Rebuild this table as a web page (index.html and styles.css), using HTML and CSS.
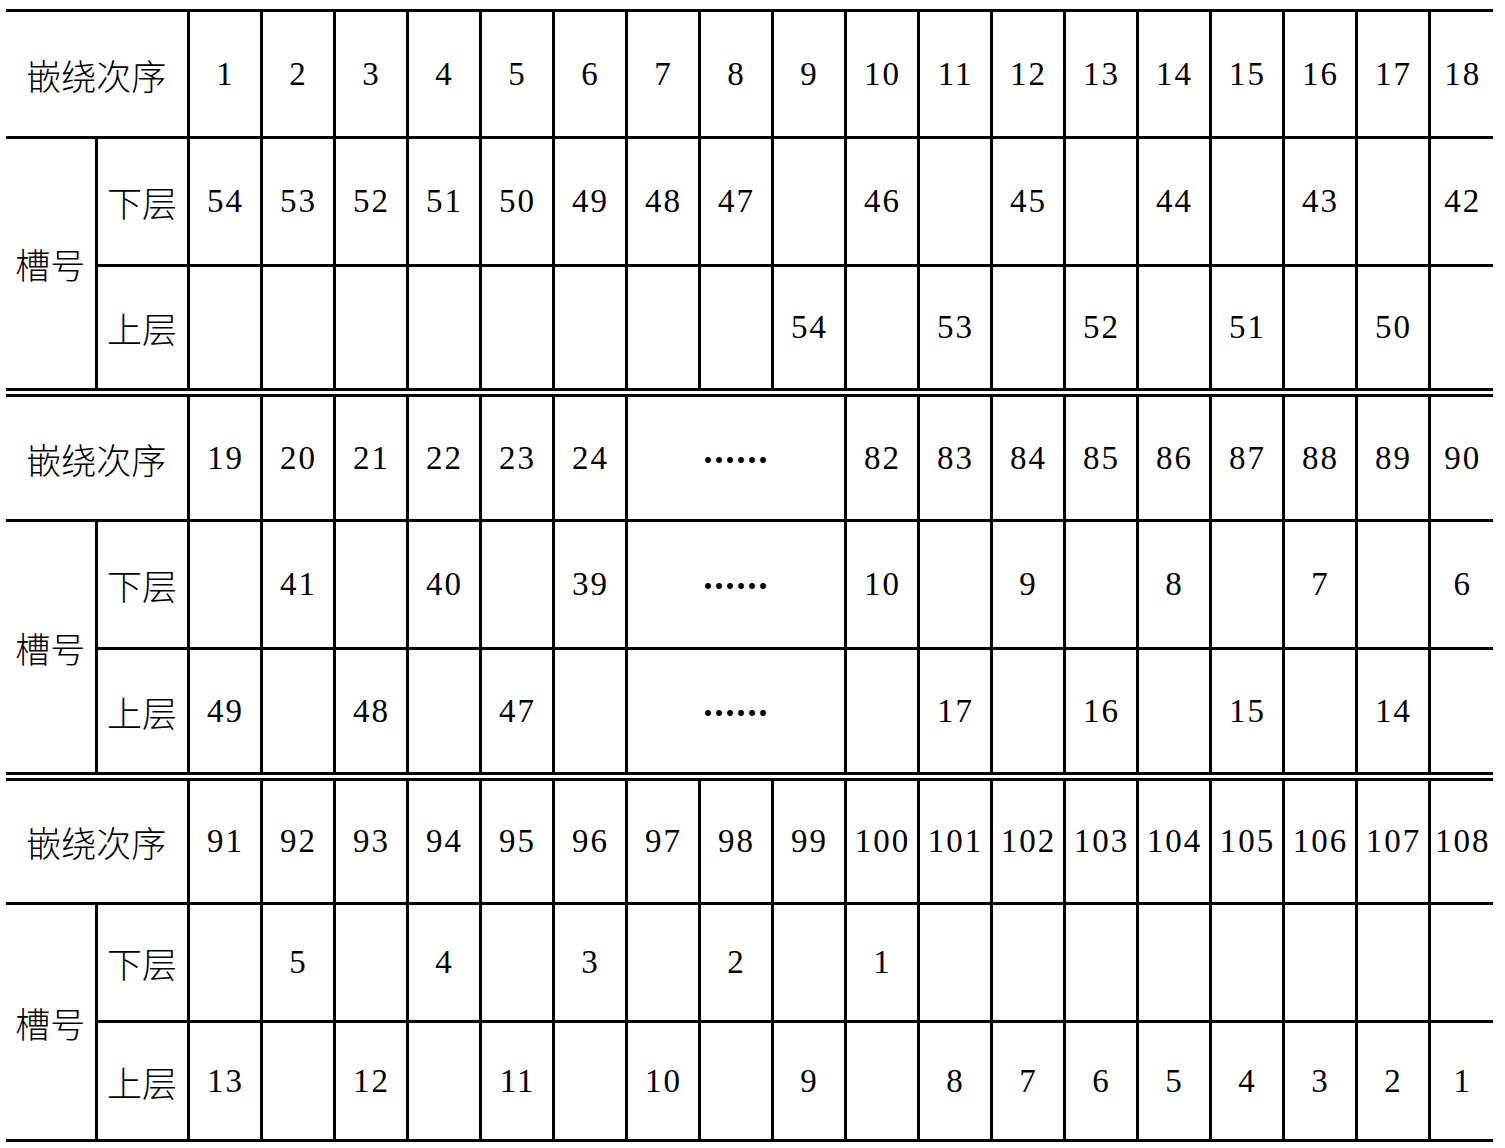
FILE: index.html
```html
<!DOCTYPE html>
<html lang="zh">
<head>
<meta charset="utf-8">
<title>嵌绕次序</title>
<link rel="stylesheet" href="styles.css">
</head>
<body>
<div class="sheet">
<table class="grid">
<colgroup>
<col class="c-a"><col class="c-b">
<col class="c-n"><col class="c-n"><col class="c-n"><col class="c-n"><col class="c-n"><col class="c-n">
<col class="c-n"><col class="c-n"><col class="c-n"><col class="c-n"><col class="c-n"><col class="c-n">
<col class="c-n"><col class="c-n"><col class="c-n"><col class="c-n"><col class="c-n"><col class="c-last">
</colgroup>
<tbody>
<tr class="r1">
<td class="zh l" colspan="2">嵌绕次序</td>
<td>1</td><td>2</td><td>3</td><td>4</td><td>5</td><td>6</td><td>7</td><td>8</td><td>9</td><td>10</td><td>11</td><td>12</td><td>13</td><td>14</td><td>15</td><td>16</td><td>17</td><td class="r">18</td>
</tr>
<tr class="r2">
<td class="zh l" rowspan="2">槽号</td>
<td class="zh">下层</td>
<td>54</td><td>53</td><td>52</td><td>51</td><td>50</td><td>49</td><td>48</td><td>47</td><td></td><td>46</td><td></td><td>45</td><td></td><td>44</td><td></td><td>43</td><td></td><td class="r">42</td>
</tr>
<tr class="r3">
<td class="zh">上层</td>
<td></td><td></td><td></td><td></td><td></td><td></td><td></td><td></td><td>54</td><td></td><td>53</td><td></td><td>52</td><td></td><td>51</td><td></td><td>50</td><td class="r"></td>
</tr>
<tr class="r4 start">
<td class="zh l" colspan="2">嵌绕次序</td>
<td>19</td><td>20</td><td>21</td><td>22</td><td>23</td><td>24</td><td class="dots" colspan="3">……</td><td>82</td><td>83</td><td>84</td><td>85</td><td>86</td><td>87</td><td>88</td><td>89</td><td class="r">90</td>
</tr>
<tr class="r5">
<td class="zh l" rowspan="2">槽号</td>
<td class="zh">下层</td>
<td></td><td>41</td><td></td><td>40</td><td></td><td>39</td><td class="dots" colspan="3">……</td><td>10</td><td></td><td>9</td><td></td><td>8</td><td></td><td>7</td><td></td><td class="r">6</td>
</tr>
<tr class="r6">
<td class="zh">上层</td>
<td>49</td><td></td><td>48</td><td></td><td>47</td><td></td><td class="dots" colspan="3">……</td><td></td><td>17</td><td></td><td>16</td><td></td><td>15</td><td></td><td>14</td><td class="r"></td>
</tr>
<tr class="r7 start">
<td class="zh l" colspan="2">嵌绕次序</td>
<td>91</td><td>92</td><td>93</td><td>94</td><td>95</td><td>96</td><td>97</td><td>98</td><td>99</td><td>100</td><td>101</td><td>102</td><td>103</td><td>104</td><td>105</td><td>106</td><td>107</td><td class="r">108</td>
</tr>
<tr class="r8">
<td class="zh l" rowspan="2">槽号</td>
<td class="zh">下层</td>
<td></td><td>5</td><td></td><td>4</td><td></td><td>3</td><td></td><td>2</td><td></td><td>1</td><td></td><td></td><td></td><td></td><td></td><td></td><td></td><td class="r"></td>
</tr>
<tr class="r9">
<td class="zh">上层</td>
<td>13</td><td></td><td>12</td><td></td><td>11</td><td></td><td>10</td><td></td><td>9</td><td></td><td>8</td><td>7</td><td>6</td><td>5</td><td>4</td><td>3</td><td>2</td><td class="r">1</td>
</tr>
</tbody>
</table>
</div>
</body>
</html>
```
FILE: styles.css
```css
html, body {
  margin: 0;
  padding: 0;
  background: #ffffff;
}

.sheet {
  padding: 9px 0 0 6px;
}

.grid {
  border-collapse: collapse;
  table-layout: fixed;
  width: 1487px;
  border: none;
}

.c-a { width: 90px; }
.c-b { width: 92px; }
.c-n { width: 73px; }
.c-last { width: 64px; }

.grid td {
  border: 3px solid #000;
  padding: 0 0 0 2px;
  text-align: center;
  vertical-align: middle;
  font-family: "Liberation Serif", "Times New Roman", serif;
  font-size: 33px;
  font-weight: 400;
  letter-spacing: 2px;
  color: #000;
  line-height: 1;
  white-space: nowrap;
}

.grid td.l { border-left: none; }
.grid td.r { border-right: none; }

.grid tr.start td { border-top: 9px double #000; }

.grid td.zh {
  font-family: "Noto Sans CJK SC", sans-serif;
  font-size: 35px;
  font-weight: 300;
  letter-spacing: 0;
  padding: 0;
}

.grid td.dots {
  font-family: "Noto Sans CJK SC", sans-serif;
  font-size: 33px;
  font-weight: 900;
  letter-spacing: 0;
  padding: 0;
}

.r1 { height: 127px; }
.r2 { height: 128px; }
.r3 { height: 127px; }
.r4 { height: 128px; }
.r5 { height: 128px; }
.r6 { height: 128px; }
.r7 { height: 127px; }
.r8 { height: 118px; }
.r9 { height: 119px; }
```
